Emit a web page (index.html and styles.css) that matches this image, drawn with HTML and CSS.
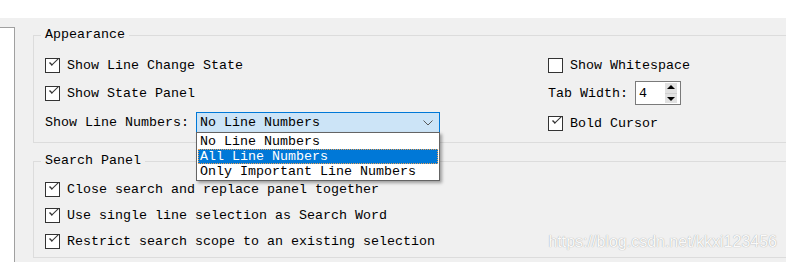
FILE: index.html
```html
<!DOCTYPE html>
<html>
<head>
  <title>Editor Options</title>
  <link rel="stylesheet" href="styles.css">
</head>
<body>
  <div class="topbar"></div>

  <div class="main">
    <div class="side-list"></div>

    <div class="options">
      <fieldset class="group group-appearance">
        <legend>Appearance</legend>
        <div class="columns">
          <div class="col col-left">
            <label class="check row-1"><span class="box checked"></span>Show Line Change State</label>
            <label class="check row-2"><span class="box checked"></span>Show State Panel</label>
            <div class="field row-3">
              <span>Show Line Numbers:</span>
              <div class="combo-wrap">
                <div class="combo">
                  <span>No Line Numbers</span>
                  <svg class="chevron" width="10" height="6" viewBox="0 0 10 6"><path d="M0.5 0.5 L5 5 L9.5 0.5" fill="none" stroke="#5a5a5a" stroke-width="1"/></svg>
                </div>
                <ul class="dropdown">
                  <li>No Line Numbers</li>
                  <li class="selected">All Line Numbers</li>
                  <li>Only Important Line Numbers</li>
                </ul>
              </div>
            </div>
          </div>

          <div class="col col-right">
            <label class="check">
              <span class="box"></span>Show Whitespace</label>
            <div class="field spin-row">
              <span>Tab Width:</span>
              <div class="spin">
                <span class="spin-value">4</span>
                <div class="spin-buttons">
                  <span class="spin-btn up"></span>
                  <span class="spin-btn down"></span>
                </div>
              </div>
            </div>
            <label class="check bold-row"><span class="box checked"></span>Bold Cursor</label>
          </div>
        </div>
      </fieldset>

      <fieldset class="group group-search">
        <legend>Search Panel</legend>
        <div class="col">
          <label class="check"><span class="box checked"></span>Close search and replace panel together</label>
          <label class="check"><span class="box checked"></span>Use single line selection as Search Word</label>
          <label class="check"><span class="box checked"></span>Restrict search scope to an existing selection</label>
        </div>
      </fieldset>
    </div>
  </div>

  <div class="watermark">https://blog.csdn.net/kkxi123456</div>
</body>
</html>
```

FILE: styles.css
```css
body {
  margin: 0;
  background: #f0f0f0;
  font-family: "Liberation Mono", "DejaVu Sans Mono", monospace;
  font-size: 13.33px;
  color: #000;
  overflow: hidden;
  height: 262px;
  position: relative;
}
.topbar {
  height: 18px;
  background: #fff;
}
.main {
  display: flex;
}
.side-list {
  width: 14px;
  height: 235px;
  margin-top: 9px;
  background: #fff;
  border-top: 1px solid #a0a0a0;
  border-right: 1px solid #a0a0a0;
}
.options {
  flex: 1;
  margin-left: 18px;
  margin-right: -20px;
}
.group {
  margin: 0;
  border: 1px solid #dcdcdc;
  padding: 0 11px;
  min-width: 0;
}
.group legend {
  margin-left: -4px;
  padding: 0 4px;
  line-height: 16px;
  height: 16px;
}
.group-appearance {
  margin-top: 9px;
  padding-top: 15px;
  padding-bottom: 9px;
}
.group-search {
  margin-top: 10px;
  padding-top: 13px;
  padding-bottom: 8px;
}
.columns {
  display: flex;
}
.col {
  display: flex;
  flex-direction: column;
}
.col-left {
  width: 503px;
}
.check {
  display: flex;
  align-items: center;
  height: 15px;
  line-height: 15px;
  white-space: nowrap;
}
.box {
  box-sizing: border-box;
  width: 15px;
  height: 15px;
  border: 1px solid #333;
  background: #fff;
  margin-right: 7px;
  position: relative;
}
.box.checked::after {
  content: "";
  position: absolute;
  left: 3px;
  top: 1px;
  width: 6px;
  height: 3px;
  border-left: 1px solid #333;
  border-bottom: 1px solid #333;
  transform: translate(0, 3px) rotate(-45deg) scaleX(1.4);
  transform-origin: left top;
}
.row-2 {
  margin-top: 13px;
}
.row-3 {
  margin-top: 11px;
}
.field {
  display: flex;
  align-items: center;
  white-space: nowrap;
}
.combo-wrap {
  position: relative;
  margin-left: 7px;
}
.combo {
  box-sizing: border-box;
  width: 244px;
  height: 21px;
  border: 1px solid #0078d7;
  background: #cce4f7;
  display: flex;
  align-items: center;
  justify-content: space-between;
  padding: 0 6px 0 3px;
}
.chevron {
  display: block;
}
.dropdown {
  position: absolute;
  top: 20px;
  left: 0;
  box-sizing: border-box;
  width: 244px;
  margin: 0;
  padding: 1px 1px;
  list-style: none;
  background: #fff;
  border: 1px solid #646464;
  box-shadow: 2px 2px 3px rgba(0, 0, 0, 0.35);
  z-index: 2;
}
.dropdown li {
  height: 15px;
  line-height: 15px;
  padding-left: 2px;
}
.dropdown li.selected {
  background: #0078d7;
  color: #fff;
  outline: 1px dotted #e8a15a;
  outline-offset: -1px;
}
.col-right {
  padding-top: 0;
}
.spin-row {
  margin-top: 8px;
}
.spin {
  box-sizing: border-box;
  width: 46px;
  height: 24px;
  margin-left: 7px;
  border: 1px solid #7a7a7a;
  background: #fff;
  display: flex;
  align-items: center;
  justify-content: space-between;
  padding: 0 3px 0 3px;
}
.spin-buttons {
  display: flex;
  flex-direction: column;
  width: 12px;
  height: 20px;
}
.spin-btn {
  flex: 1;
  background: #e1e1e1;
  position: relative;
}
.spin-btn.up {
  border-bottom: 1px solid #cfcfcf;
}
.spin-btn::after {
  content: "";
  position: absolute;
  left: 2px;
  border-left: 4px solid transparent;
  border-right: 4px solid transparent;
}
.spin-btn.up::after {
  top: 2px;
  border-bottom: 4px solid #000;
}
.spin-btn.down::after {
  top: 3px;
  border-top: 4px solid #000;
}
.bold-row {
  margin-top: 11px;
}
.group-search .check + .check {
  margin-top: 11px;
}
.watermark {
  position: absolute;
  top: 233px;
  right: 9px;
  font-family: "Liberation Sans", Arial, sans-serif;
  font-size: 16px;
  color: #fafafa;
  text-shadow: 0 0 1px rgba(0, 0, 0, 0.4);
  pointer-events: none;
}
```
